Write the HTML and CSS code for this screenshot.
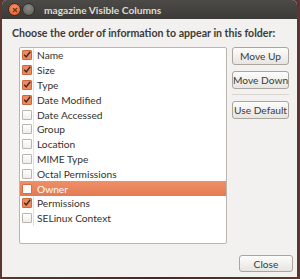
FILE: index.html
```html
<!DOCTYPE html>
<html lang="en">

<head>
    <meta charset="UTF-8">
    <title>magazine Visible Columns</title>
    <link rel="stylesheet" href="styles.css">
</head>

<body>
    <div class="window">
        <div class="titlebar">
            <span class="wm-button wm-close">
                <svg width="6" height="6" viewBox="0 0 6 6"><path d="M1 1L5 5M5 1L1 5" stroke="#7a2d14" stroke-width="1.3"/></svg>
            </span>
            <span class="wm-button wm-min"></span>
            <span class="title">magazine Visible Columns</span>
        </div>

        <div class="content">
            <p class="heading">Choose the order of information to appear in this folder:</p>

            <div class="main">
                <div class="column-list">
                    <div class="row"><span class="check-cell"><span class="box checked"></span></span><span class="label">Name</span></div>
                    <div class="row"><span class="check-cell"><span class="box checked"></span></span><span class="label">Size</span></div>
                    <div class="row"><span class="check-cell"><span class="box checked"></span></span><span class="label">Type</span></div>
                    <div class="row"><span class="check-cell"><span class="box checked"></span></span><span class="label">Date Modified</span></div>
                    <div class="row"><span class="check-cell"><span class="box"></span></span><span class="label">Date Accessed</span></div>
                    <div class="row"><span class="check-cell"><span class="box"></span></span><span class="label">Group</span></div>
                    <div class="row"><span class="check-cell"><span class="box"></span></span><span class="label">Location</span></div>
                    <div class="row"><span class="check-cell"><span class="box"></span></span><span class="label">MIME Type</span></div>
                    <div class="row"><span class="check-cell"><span class="box"></span></span><span class="label">Octal Permissions</span></div>
                    <div class="row selected"><span class="check-cell"><span class="box"></span></span><span class="label">Owner</span></div>
                    <div class="row"><span class="check-cell"><span class="box checked"></span></span><span class="label">Permissions</span></div>
                    <div class="row"><span class="check-cell"><span class="box"></span></span><span class="label">SELinux Context</span></div>
                </div>

                <div class="side-buttons">
                    <button class="button">Move Up</button>
                    <button class="button">Move Down</button>
                    <div class="separator"></div>
                    <button class="button">Use Default</button>
                </div>
            </div>

            <div class="footer">
                <button class="button close-button">Close</button>
            </div>
        </div>
    </div>
</body>

</html>
```

FILE: styles.css
```css
body {
    margin: 0;
    width: 300px;
    height: 279px;
    overflow: hidden;
    background: linear-gradient(90deg, #5d3531, #4a2825 50%, #5d3531);
    font-family: Lato, "Liberation Sans", sans-serif;
}

.window {
    margin-left: 2px;
    width: 295px;
    height: 277px;
    background-color: #f2f1f0;
    border-radius: 5px 5px 0 0;
    overflow: hidden;
    display: flex;
    flex-direction: column;
}

.titlebar {
    height: 19px;
    flex-shrink: 0;
    display: flex;
    align-items: center;
    padding-left: 6px;
    background: linear-gradient(#4b4a46, #3c3b37);
}

.wm-button {
    width: 11px;
    height: 11px;
    border-radius: 50%;
    margin-right: 1px;
    display: flex;
    align-items: center;
    justify-content: center;
}

.wm-close {
    background: radial-gradient(circle at 50% 35%, #f7946a, #e0582a);
    border: 0.5px solid #3a2a22;
}

.wm-min {
    background: radial-gradient(circle at 50% 35%, #8a8984, #5b5a55);
    border: 0.5px solid #2e2d2a;
}

.title {
    margin-left: 8px;
    color: #dfdbd2;
    font-weight: bold;
    font-size: 10.2px;
}

.content {
    flex: 1;
    display: flex;
    flex-direction: column;
    padding: 8px 4px 4px 10px;
}

.heading {
    margin: 0;
    font-size: 10.6px;
    font-weight: bold;
    line-height: 13px;
    color: #3c3b37;
}

.main {
    display: flex;
    margin-top: 7px;
    margin-left: 7px;
}

.column-list {
    width: 206px;
    height: 195px;
    background: white;
    border: 1px solid #bab5ad;
    border-radius: 2px;
}

.row {
    display: flex;
    align-items: center;
    height: 14.8px;
    font-size: 10.2px;
    color: #33322e;
}

.check-cell {
    width: 11px;
    height: 100%;
    padding-left: 2px;
    display: flex;
    align-items: center;
    border-right: 1px solid #e3e0dc;
}

.box {
    width: 8px;
    height: 8px;
    border: 1px solid #b9b4ac;
    border-radius: 1px;
    background: linear-gradient(#ffffff, #eeedeb);
}

.box.checked {
    border-color: #c9673f;
    background-color: #ef8a5f;
    background-image: url("data:image/svg+xml,%3Csvg xmlns='http://www.w3.org/2000/svg' viewBox='0 0 8 8'%3E%3Cpath d='M1.2 3.8L3.2 6L7.2 0.8' fill='none' stroke='%233c2b24' stroke-width='1.4'/%3E%3C/svg%3E");
    background-size: 8px 8px;
}

.label {
    padding-left: 3px;
}

.row.selected {
    background: linear-gradient(#ef9068, #e47a52);
    color: white;
}

.row.selected .check-cell {
    border-right-color: transparent;
}

.row.selected .box {
    background: white;
    border-color: #d76e47;
}

.side-buttons {
    display: flex;
    flex-direction: column;
    margin-left: 5px;
    width: 57px;
}

.button {
    font-family: Lato, "Liberation Sans", sans-serif;
    font-size: 10.2px;
    color: #3c3b37;
    height: 18px;
    padding: 0;
    white-space: nowrap;
    border: 1px solid #aaa59d;
    border-radius: 3px;
    background: linear-gradient(#fcfcfb, #e7e5e2);
}

.side-buttons .button + .button {
    margin-top: 6px;
}

.separator {
    height: 1px;
    background: #d9d6d1;
    margin: 5px 0 6px;
}

.footer {
    margin-top: auto;
    display: flex;
    justify-content: flex-end;
}

.close-button {
    width: 54px;
    height: 17px;
    margin-bottom: 1px;
}
```
